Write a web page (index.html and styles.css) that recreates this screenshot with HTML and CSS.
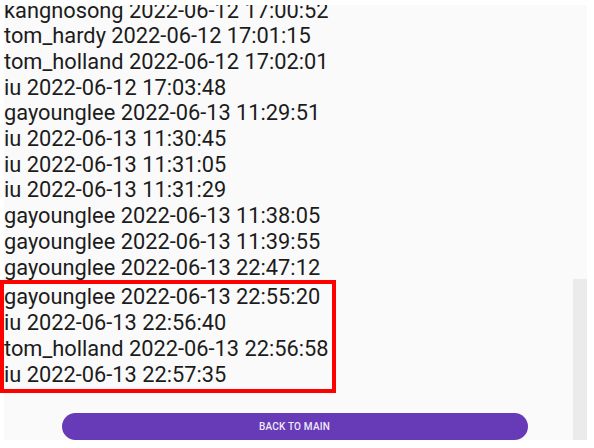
FILE: index.html
```
<!DOCTYPE html>
<html lang="en">
<head>
<meta charset="utf-8">
<title>Login history</title>
<link rel="stylesheet" href="styles.css">
</head>
<body>
<div class="screen">
  <div class="history">
    <div class="entry">kangnosong 2022-06-12 17:00:52</div>
    <div class="entry">tom_hardy 2022-06-12 17:01:15</div>
    <div class="entry">tom_holland 2022-06-12 17:02:01</div>
    <div class="entry">iu 2022-06-12 17:03:48</div>
    <div class="entry">gayounglee 2022-06-13 11:29:51</div>
    <div class="entry">iu 2022-06-13 11:30:45</div>
    <div class="entry">iu 2022-06-13 11:31:05</div>
    <div class="entry">iu 2022-06-13 11:31:29</div>
    <div class="entry">gayounglee 2022-06-13 11:38:05</div>
    <div class="entry">gayounglee 2022-06-13 11:39:55</div>
    <div class="entry">gayounglee 2022-06-13 22:47:12</div>
    <div class="highlight">
      <div class="entry">gayounglee 2022-06-13 22:55:20</div>
      <div class="entry">iu 2022-06-13 22:56:40</div>
      <div class="entry">tom_holland 2022-06-13 22:56:58</div>
      <div class="entry">iu 2022-06-13 22:57:35</div>
    </div>
  </div>
  <button class="back-btn" type="button">BACK TO MAIN</button>
  <div class="scroll-track"></div>
</div>
</body>
</html>
```
FILE: styles.css
```
html, body {
  margin: 0;
  padding: 0;
  background: #ffffff;
}

body {
  font-family: Roboto, "Liberation Sans", sans-serif;
  width: 594px;
  height: 448px;
  overflow: hidden;
}

.screen {
  position: relative;
  margin: 5px 7px 0 4px;
  height: 435px;
  background: #fafafa;
  clip-path: inset(0 0 0 -4px);
  display: flex;
  flex-direction: column;
}

.history {
  margin-top: -7.5px;
  display: flex;
  flex-direction: column;
  align-items: flex-start;
}

.entry {
  font-size: 21.8px;
  line-height: 25.7px;
  color: #1c1c1c;
  white-space: nowrap;
}

.highlight {
  box-sizing: border-box;
  margin-left: -4px;
  width: 336px;
  padding-bottom: 1px;
  border: 4px solid #ff0000;
}

.highlight .entry {
  line-height: 26px;
}

.back-btn {
  align-self: center;
  margin-top: 20px;
  margin-left: -2px;
  width: 466px;
  height: 27px;
  flex-shrink: 0;
  border: none;
  border-radius: 14px;
  background: #673ab7;
  color: #efe9f7;
  font-family: Roboto, "Liberation Sans", sans-serif;
  font-size: 10px;
  font-weight: 500;
  letter-spacing: 0.2px;
  padding: 0;
}

.scroll-track {
  position: absolute;
  right: 0;
  top: 274px;
  bottom: 0;
  width: 14px;
  background: #ebebeb;
}
```
